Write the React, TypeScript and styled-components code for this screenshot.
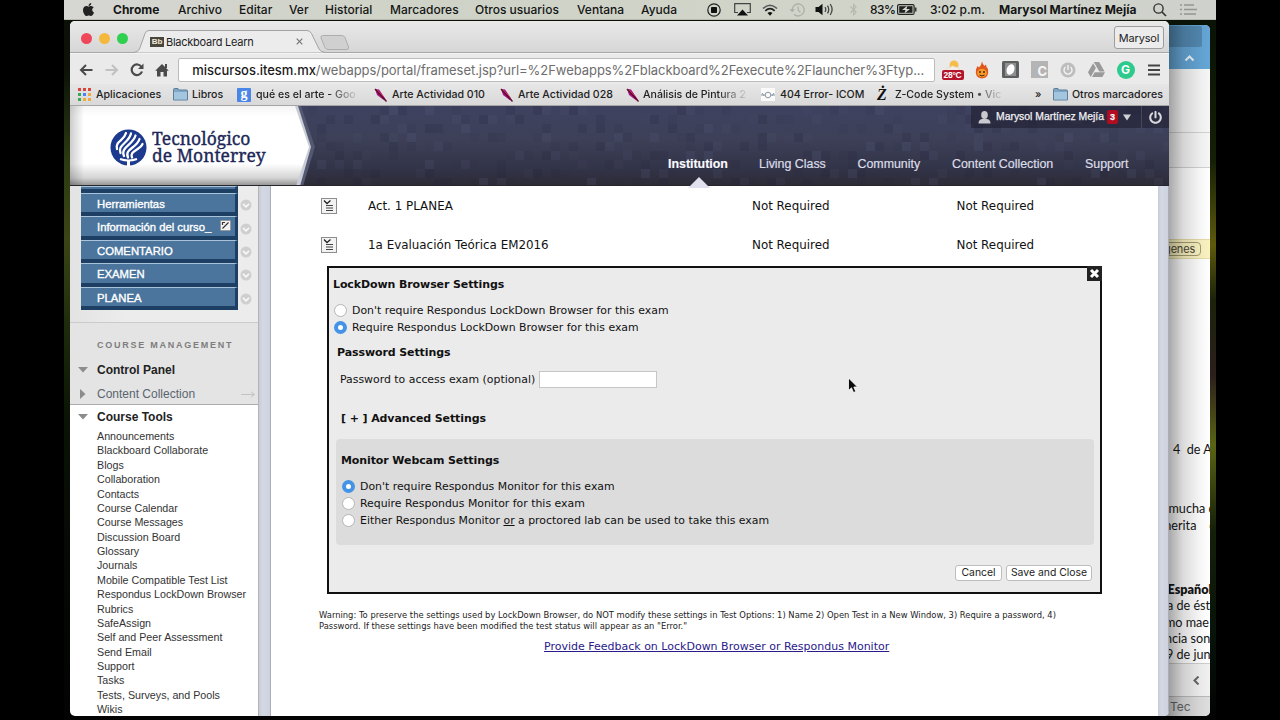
import React from 'react';
import styled, { createGlobalStyle } from 'styled-components';
import { FaApple, FaBluetoothB, FaGoogleDrive, FaPowerOff } from 'react-icons/fa';

const GlobalStyle = createGlobalStyle`
  *, *::before, *::after { box-sizing: border-box; }
  body { margin: 0; background: #000; overflow: hidden; }
`;

const sans = '"Liberation Sans", Arial, sans-serif';
const ui = 'Inter, Roboto, sans-serif';
const verdana = '"DejaVu Sans", Verdana, sans-serif';

/* ---------- desktop ---------- */

const Screen = styled.div`
  width: 1280px;
  height: 720px;
  background: #000;
  display: flex;
  justify-content: center;
  overflow: hidden;
`;

const Desktop = styled.div`
  position: relative;
  width: 1152px;
  height: 720px;
  overflow: hidden;
  background:
    linear-gradient(#0b1008 0, #0c1208 70px, #2c3a12 160px, #3a4516 240px, #1d2a0b 330px, #0a1305 420px, #050805 560px, #020302 720px) 0 0 / 50% 100% no-repeat,
    linear-gradient(#081106 0, #141f06 160px, #5d5a0d 245px, #1b220a 300px, #2b1f1c 375px, #5a6414 445px, #15200a 530px, #07120a 640px, #020302 720px) 100% 0 / 50% 100% no-repeat;
`;

const Spacer = styled.div<{ $w?: number }>`
  flex: ${p => (p.$w ? `0 0 ${p.$w}px` : '1 1 0')};
`;

/* ---------- system menu bar ---------- */

const MenuBar = styled.div`
  display: flex;
  align-items: center;
  height: 20px;
  background: linear-gradient(90deg, #d6d6d2, #cfd3c7 30%, #d0d4c9 70%, #cfd1cc);
  border-bottom: 1px solid #b9bbb3;
  font: 500 12px/20px ${ui};
  color: #151515;
`;

const MenuItem = styled.span<{ $w: number; $bold?: boolean; $ls?: number }>`
  flex: 0 0 ${p => p.$w}px;
  white-space: nowrap;
  font-weight: ${p => (p.$bold ? 700 : 450)};
  letter-spacing: ${p => p.$ls ?? 0}px;
`;

const MenuIcon = styled.span<{ $w: number }>`
  flex: 0 0 ${p => p.$w}px;
  display: flex;
  align-items: center;
  height: 20px;
`;

/* ---------- window behind the browser ---------- */

const BackWindow = styled.div`
  position: absolute;
  left: 1085px;
  top: 25px;
  width: 61px;
  height: 691px;
  border-radius: 5px;
  overflow: hidden;
  display: flex;
  flex-direction: column;
  background: #fff;
  font: 12.6px/16px Lato, "Open Sans", sans-serif;
  color: #141414;
`;

const BackTitle = styled.div`
  height: 45px;
  background: #64a6d6;
  display: flex;
  flex-direction: column;
`;

const BackSearch = styled.div`
  height: 21px;
  margin: 1px 8px 7px 0;
  background: #5288b0;
  border-radius: 2px;
`;

const BackArrows = styled.div`
  display: flex;
  justify-content: flex-end;
  padding-right: 15px;
  svg { display: block; }
`;

const BackToolbar = styled.div<{ $h: number }>`
  height: ${p => p.$h}px;
  background: #f6f6f6;
  border-bottom: 1px solid #d2d2d2;
`;

const BackNotice = styled.div`
  margin-top: 71px;
  height: 20px;
  background: #faf2c0;
  border-top: 1px solid #e6dca8;
  border-bottom: 1px solid #e6dca8;
  display: flex;
  align-items: center;
  justify-content: flex-end;
  padding-right: 9px;
`;

const BackPill = styled.div`
  border: 1px solid #a39c72;
  border-radius: 4px;
  width: 48px;
  height: 14px;
  padding-right: 5px;
  text-align: right;
  font: 11px/12px ${ui};
  letter-spacing: -0.2px;
  color: #4a4733;
`;

const BackLine = styled.div<{ $mt?: number; $ml?: number; $bold?: boolean }>`
  margin-top: ${p => p.$mt ?? 0}px;
  margin-left: ${p => p.$ml ?? 7}px;
  height: 16.3px;
  flex-shrink: 0;
  white-space: pre;
  font-weight: ${p => (p.$bold ? 800 : 400)};
`;

const BackFooter = styled.div`
  height: 33px;
  background: #f1f1f1;
  border-top: 1px solid #cfcfcf;
  display: flex;
  align-items: center;
  justify-content: flex-end;
  padding-right: 10px;
`;

const BackStatus = styled.div`
  height: 20px;
  background: #dedede;
  border-top: 1px solid #bbb;
  padding-left: 21px;
  font: 12px/19px ${ui};
  color: #666;
`;

/* ---------- browser window ---------- */

const Browser = styled.div`
  position: absolute;
  left: 6px;
  top: 21px;
  width: 1099px;
  height: 695px;
  border-radius: 5px;
  overflow: hidden;
  display: flex;
  flex-direction: column;
  background: #fff;
`;

const BrowserShadow = styled.div`
  position: absolute;
  left: 1085px;
  top: 25px;
  width: 61px;
  height: 691px;
  border-radius: 5px;
  background: linear-gradient(90deg, rgba(0, 0, 0, 0.34) 20px, rgba(0, 0, 0, 0.14) 34px, rgba(0, 0, 0, 0.03) 52px, transparent);
`;

const TitleBar = styled.div`
  display: flex;
  align-items: flex-start;
  height: 32px;
  background: linear-gradient(#e9e9e9, #d6d6d6);
  border-bottom: 1px solid #a8a8a8;
`;

const Lights = styled.div`
  display: flex;
  gap: 7px;
  padding: 12px 0 0 11px;
  width: 66px;
`;

const Light = styled.span<{ $c: string }>`
  width: 11px;
  height: 11px;
  border-radius: 50%;
  background: ${p => p.$c};
`;

const Tab = styled.div`
  position: relative;
  display: flex;
  align-items: center;
  width: 184px;
  height: 32px;
  padding: 9px 0 0 14px;
  font: 11px/14px ${ui};
  color: #1d1d1d;
`;

const TabShape = styled.svg`
  position: absolute;
  left: -2px;
  top: 9px;
`;

const TabIcon = styled.span`
  position: relative;
  width: 14px;
  height: 10px;
  margin-right: 2px;
  background: #4b463c;
  color: #f0ead8;
  font: bold 8px/10px ${sans};
  text-align: center;
`;

const TabTitle = styled.span`
  position: relative;
  flex: 1;
  letter-spacing: -0.25px;
`;

const TabClose = styled.svg`
  position: relative;
  margin-right: 17px;
`;

const NewTab = styled.svg`
  margin: 13px 0 0 0;
`;

const Profile = styled.div`
  margin: 5px 5px 0 0;
  width: 50px;
  height: 23px;
  border: 1px solid #9d9d9d;
  border-radius: 3px;
  background: #ececec;
  font: 10.9px/22px ${ui};
  letter-spacing: -0.1px;
  text-align: center;
  color: #222;
`;

const Toolbar = styled.div`
  display: flex;
  align-items: center;
  height: 31px;
  padding-top: 1px;
  background: #eaeaea;
  border-top: 1px solid #f4f4f4;
`;

const ToolIcon = styled.span<{ $w: number }>`
  flex: 0 0 ${p => p.$w}px;
  display: flex;
  justify-content: center;
  align-items: center;
  height: 24px;
`;

const Omnibox = styled.div`
  display: flex;
  align-items: center;
  width: 757px;
  height: 24px;
  padding: 0 4px 0 7px;
  background: #fff;
  border: 1px solid #bcbcbc;
  border-radius: 2px;
`;

const Url = styled.span`
  flex: 1;
  margin-left: 6px;
  font: 13px/22px ${ui};
  letter-spacing: -0.05px;
  color: #6d6d6d;
  white-space: nowrap;
  b { font-weight: 450; color: #1a1a1a; }
`;

const Weather = styled.span`
  display: flex;
  flex-direction: column;
  align-items: center;
  b {
    width: 22px;
    height: 10px;
    margin-top: -2px;
    background: #b5122c;
    border-radius: 2px;
    color: #fff;
    text-align: center;
    font: bold 8.5px/10px ${sans};
    letter-spacing: -0.3px;
  }
`;

const Grammar = styled.span`
  width: 18px;
  height: 18px;
  border-radius: 50%;
  background: #2dca8e;
  color: #fff;
  font: 700 12px/18px ${ui};
  text-align: center;
`;

const GraySquare = styled.span`
  width: 17px;
  height: 17px;
  background: #b4b4b4;
  color: #f6f6f6;
  text-align: right;
  padding-right: 1px;
  font: 700 13px/20px ${ui};
`;

const Bookmarks = styled.div`
  display: flex;
  align-items: center;
  height: 22px;
  padding-left: 8px;
  background: linear-gradient(#e6e6e6, #d9d9d9);
  border-bottom: 1px solid #a6a6a6;
`;

const Bookmark = styled.span<{ $w: number; $icon: number; $fade?: boolean; $ls?: number }>`
  flex: 0 0 ${p => p.$w}px;
  display: grid;
  grid-template-columns: ${p => p.$icon}px auto;
  justify-content: start;
  align-items: center;
  font: 450 10.6px/18px ${ui};
  letter-spacing: ${p => p.$ls ?? 0}px;
  color: #222;
  white-space: nowrap;
  svg { display: block; }
  em {
    font-style: normal;
    ${p => p.$fade && 'mask-image: linear-gradient(90deg, #000 72%, rgba(0,0,0,0.1) 100%);'}
  }
`;

const GoogleIcon = styled.span`
  width: 14px;
  height: 14px;
  border-radius: 1px;
  background: #4a86e8;
  color: #fff;
  font: bold 14px/11px "Liberation Serif", serif;
  text-align: center;
`;

const ZIcon = styled.span`
  font: italic bold 16px/18px "Liberation Serif", serif;
  color: #111;
`;

const PhotoIcon = styled.span`
  width: 14px;
  height: 13px;
  background: #fafafa;
  display: flex;
  align-items: center;
`;

/* ---------- page header ---------- */

const Header = styled.div`
  position: relative;
  display: flex;
  justify-content: space-between;
  height: 80px;
  flex-shrink: 0;
  background: linear-gradient(#3f4260 0%, #3d4058 40%, #33354a 75%, #2c2b36 100%);
`;

const HeaderArt = styled.svg`
  position: absolute;
  left: 0;
  top: 0;
`;

const Brand = styled.div`
  position: relative;
  display: flex;
  align-items: center;
  gap: 5px;
  padding: 2px 0 0 40px;
  svg { display: block; }
`;

const BrandName = styled.div`
  font: 17.5px/17px "Noto Serif", "Liberation Serif", serif;
  color: #1d2757;
  -webkit-text-stroke: 0.35px #1d2757;
  span { display: block; white-space: nowrap; }
`;

const HeaderRight = styled.div`
  position: relative;
  display: flex;
  flex-direction: column;
  align-items: flex-end;
`;

const UserBar = styled.div`
  display: flex;
  align-items: center;
  width: 198px;
  height: 22px;
  padding-left: 7px;
  background: rgba(28, 28, 44, 0.55);
  font: 10.4px/22px ${sans};
  color: #f2f2f4;
  -webkit-text-stroke: 0.25px #f2f2f4;
`;

const UserName = styled.span`
  margin-left: 5px;
  width: 111px;
  white-space: nowrap;
`;

const Count = styled.span`
  width: 11px;
  height: 14px;
  border-radius: 2px;
  background: #b00d20;
  text-align: center;
  font: bold 9px/14px ${sans};
`;

const PowerCell = styled.span`
  margin-left: 10px;
  padding-left: 7px;
  height: 22px;
  border-left: 1px solid #45475a;
  display: flex;
  align-items: center;
`;

const Nav = styled.div`
  display: flex;
  margin-top: 25px;
  width: 501px;
  height: 33px;
  font: 12.4px/22px ${sans};
  color: #dcdde6;
  -webkit-text-stroke: 0.2px #dcdde6;
`;

const NavItem = styled.div<{ $w: number; $active?: boolean }>`
  flex: 0 0 ${p => p.$w}px;
  white-space: nowrap;
  font-weight: ${p => (p.$active ? 700 : 400)};
  color: ${p => (p.$active ? '#fff' : 'inherit')};
  svg { display: block; margin: 1px 0 0 20px; }
`;

/* ---------- page body ---------- */

const Page = styled.div`
  display: flex;
  height: 530px;
`;

const Sidebar = styled.div`
  width: 189px;
  border-right: 1px solid #b4b4b4;
  display: flex;
  flex-direction: column;
  overflow: hidden;
  font-family: ${sans};
`;

const CourseMenu = styled.div`
  height: 137px;
  flex-shrink: 0;
  background: linear-gradient(90deg, #e3e3e3, #ececec 30%);
  border-bottom: 1px solid #cbcbcb;
`;

const CourseRow = styled.div<{ $h?: number }>`
  display: flex;
  align-items: center;
  height: ${p => p.$h ?? 23.4}px;
  padding-left: 11px;
  gap: 2px;
  svg { display: block; flex-shrink: 0; margin-top: 1px; }
`;

const CourseLink = styled.div`
  display: flex;
  justify-content: space-between;
  width: 157px;
  height: 100%;
  padding: 0 4px 0 16px;
  background: #4b759d;
  border-top: 1px solid #a9c3da;
  border-right: 3px solid #1e3f64;
  border-bottom: 4px solid #1e3f64;
  color: #fff;
  font: 11.3px/20px ${sans};
  -webkit-text-stroke: 0.35px #fff;
  white-space: nowrap;
  svg { margin-top: 3px; }
`;

const Management = styled.div`
  height: 82px;
  flex-shrink: 0;
  background: #e4e4e4;
  border-bottom: 1px solid #ababab;
`;

const SectionLabel = styled.div`
  padding: 12px 0 0 27px;
  height: 35px;
  font: bold 9px/20px ${sans};
  letter-spacing: 1.75px;
  color: #7d7d7d;
`;

const Group = styled.div<{ $muted?: boolean }>`
  display: flex;
  align-items: center;
  height: 24px;
  padding: 0 2px 0 8px;
  font: ${p => (p.$muted ? '400' : '700')} 12px/24px ${sans};
  color: ${p => (p.$muted ? '#5a6470' : '#222')};
  span { flex: 1; }
`;

const GroupMark = styled.svg`
  width: 10px;
  margin-right: 9px;
`;

const ToolList = styled.div`
  padding: 0 0 0 27px;
  font: 10.7px/14.39px ${sans};
  color: #333;
  div { height: 14.39px; white-space: nowrap; }
`;

const Gutter = styled.div<{ $w: number }>`
  width: ${p => p.$w}px;
  flex-shrink: 0;
  background: linear-gradient(90deg, #c9ccd2, #d3d9e4 35%, #cdd2de);
  border-right: 1px solid #a9aeb8;
`;

const Main = styled.div`
  flex: 1;
  background: #fff;
  font-family: ${verdana};
  color: #111;
`;

const ExamRow = styled.div`
  display: grid;
  grid-template-columns: 47px 384px 204.5px auto;
  align-items: center;
  height: 39.5px;
  padding-left: 50px;
  font-size: 11.9px;
  svg { display: block; }
`;

const Dialog = styled.div`
  position: relative;
  margin: 1px 0 0 56px;
  width: 775px;
  height: 328px;
  padding-top: 7px;
  border: 2px solid #111;
  background: #ebebeb;
  font-size: 11px;
`;

const CloseBox = styled.svg`
  position: absolute;
  right: -2px;
  top: -2px;
`;

const Heading = styled.div<{ $ml: number; $mt?: number }>`
  margin: ${p => p.$mt ?? 0}px 0 0 ${p => p.$ml}px;
  height: 20px;
  font: bold 11px/20px ${verdana};
  letter-spacing: -0.1px;
  white-space: pre;
`;

const Options = styled.div<{ $ml: number }>`
  margin: 7px 0 0 ${p => p.$ml}px;
`;

const Option = styled.label`
  display: flex;
  align-items: center;
  gap: 5px;
  height: 17px;
  font-size: 10.9px;
  white-space: pre;
`;

const Radio = styled.span<{ $on?: boolean }>`
  width: 13px;
  height: 13px;
  border-radius: 50%;
  border: ${p => (p.$on ? '4.5px solid #4593e6' : '1px solid #b5b5b5')};
  background: #fff;
`;

const Field = styled.div`
  display: flex;
  align-items: center;
  gap: 4px;
  margin: 6px 0 0 11px;
  height: 20px;
  font-size: 10.9px;
`;

const Input = styled.div`
  width: 118px;
  height: 17px;
  border: 1px solid #c6c6c6;
  background: #fff;
`;

const Monitor = styled.div`
  margin: 10px 6px 0 7px;
  height: 106px;
  padding-top: 12px;
  border-radius: 4px;
  background: #dcdcdc;
`;

const Actions = styled.div`
  display: flex;
  justify-content: flex-end;
  gap: 4px;
  padding: 20px 8px 0 0;
`;

const Button = styled.div<{ $w: number }>`
  width: ${p => p.$w}px;
  height: 16px;
  border: 1px solid #bdbdbd;
  border-radius: 3px;
  background: #fff;
  text-align: center;
  font: 10.4px/14px ${ui};
  color: #222;
  white-space: nowrap;
`;

const Warning = styled.div`
  margin: 16px 0 0 48px;
  font-size: 8.4px;
  line-height: 10.7px;
  color: #222;
  div { white-space: nowrap; }
`;

const Feedback = styled.div`
  margin: 8px 0 0 273px;
  font-size: 11px;
  line-height: 16px;
  color: #2a1a8a;
  text-decoration: underline;
`;

const Pointer = styled.svg`
  position: absolute;
  left: 783px;
  top: 377px;
`;

/* ---------- drawings ---------- */

const Feather = () => (
  <svg width="13" height="14" viewBox="0 0 13 14">
    <path d="M1 1 L5 1.5 L10.500 9.500 L12.500 13 L9 11.500 L3 7 Z" fill="#a3128a" />
    <path d="M1 1 L12.500 13.500" stroke="#5b0b22" strokeWidth="1.300" />
    <path d="M3 2 L10 9" stroke="#d43b3b" strokeWidth="0.700" />
  </svg>
);

const Folder = () => (
  <svg width="15" height="13" viewBox="0 0 15 13">
    <path d="M0.500 1.500 Q0.500 0.500 1.500 0.500 H5 L6.200 2 H13.500 Q14.500 2 14.500 3 V12 H0.500 Z" fill="#7fa6c4" stroke="#5c7f9a" />
    <rect x="1" y="4" width="13" height="7.500" fill="#a3c6de" />
  </svg>
);

const AppsGrid = () => (
  <svg width="13" height="13" viewBox="0 0 13 13">
    {['#d8453c', '#d8453c', '#d8453c', '#3aa757', '#4285f4', '#f2a93b', '#3aa757', '#f2a93b', '#f2a93b'].map((c, i) => (
      <rect key={i} x={(i % 3) * 5} y={Math.floor(i / 3) * 5} width="3" height="3" fill={c} />
    ))}
  </svg>
);

const Chevron = () => (
  <svg width="12" height="12" viewBox="0 0 12 12">
    <circle cx="6" cy="6" r="5.500" fill="#cfcfcf" />
    <path d="M3 4.800 L6 7.800 L9 4.800" fill="none" stroke="#f7f7f7" strokeWidth="1.800" />
  </svg>
);

const RowMenu = () => (
  <svg width="16" height="16" viewBox="0 0 16 16">
    <rect x="0.500" y="0.500" width="15" height="15" fill="#f3f3f3" stroke="#8d8d8d" />
    <path d="M3 2.500 L6 5.500 L9.500 2.500" fill="none" stroke="#222" strokeWidth="1.300" />
    <path d="M5 7.500 H12 M5 10 H12 M5 12.500 H12" stroke="#444" strokeWidth="1" />
  </svg>
);

const Caret = ({ right }: { right?: boolean }) => (
  <GroupMark width="10" height="10" viewBox="0 0 10 10">
    <path d={right ? 'M2 0 L7.500 5 L2 10 Z' : 'M0 2 H10 L5 7.500 Z'} fill="#8c8c8c" />
  </GroupMark>
);

const Torch = () => (
  <svg width="37" height="37" viewBox="0 0 37 37">
    <circle cx="18.500" cy="18.500" r="18" fill="#1c3a8e" />
    <g fill="none" stroke="#fff" strokeWidth="2.300" strokeLinecap="round">
      <path d="M7 20 C5 12 14 12 16 4" />
      <path d="M10.500 24 C7 16 19 14 21 4.500" />
      <path d="M14 27 C10 18 23 16 25.500 6.500" />
      <path d="M18 28.500 C14 20 27 19 29.500 10" />
      <path d="M22 28.500 C19 22 30 21 32.500 15" />
    </g>
    <path d="M10 30 Q18.500 33 27 30" fill="none" stroke="#fff" strokeWidth="2" />
    <path d="M18.500 31 V37" stroke="#fff" strokeWidth="3" />
  </svg>
);

const pixels = Array.from({ length: 260 }, (_, i) => {
  const a = (i * 7919 + 13) % 1009;
  const b = (i * 104729 + 7) % 997;
  return {
    x: 238 + (a % 96) * 9,
    y: (b % 9) * 9,
    dark: (a * 3 + b) % 5 < 3,
    o: 0.05 + ((a + b) % 7) * 0.025,
  };
});

const exts = (
  <>
    <ToolIcon $w={29}>
      <Weather>
        <svg width="16" height="12" viewBox="0 0 16 12">
          <circle cx="9" cy="5" r="4.500" fill="#f6bd4a" />
          <path d="M1 11 Q1 7 5 7.500 Q7 4.500 10 7 Q15 6.500 15 11 Z" fill="#f3eee4" stroke="#d9cfb8" strokeWidth="0.500" />
        </svg>
        <b>28°C</b>
      </Weather>
    </ToolIcon>
    <ToolIcon $w={29}>
      <svg width="16" height="18" viewBox="0 0 16 18">
        <path d="M8 0.500 Q8.500 3 10.500 5 L12 3.500 Q12 6 14 8 Q15.500 17 8 17.500 Q0.500 17 2 8.500 L3.500 5 L5 6.500 Q7.500 4 8 0.500 Z" fill="#e2571e" />
        <ellipse cx="8" cy="12" rx="4.800" ry="4.200" fill="#f59b2c" />
        <path d="M6 10 V12 M10 10 V12" stroke="#40210e" strokeWidth="1.400" />
        <path d="M5.500 14 Q8 16 10.500 14" fill="none" stroke="#40210e" />
      </svg>
    </ToolIcon>
    <ToolIcon $w={29}>
      <svg width="17" height="17" viewBox="0 0 17 17">
        <rect width="17" height="17" rx="1.500" fill="#5c5f60" />
        <rect x="3" y="2" width="11" height="13" fill="#8d9091" />
        <ellipse cx="8.500" cy="8.500" rx="3.800" ry="5.500" transform="rotate(20 8.500 8.500)" fill="#fff" />
      </svg>
    </ToolIcon>
    <ToolIcon $w={29}><GraySquare>C</GraySquare></ToolIcon>
    <ToolIcon $w={28}>
      <svg width="16" height="16" viewBox="0 0 16 16">
        <circle cx="8" cy="8" r="7.500" fill="#bdbdbd" />
        <path d="M5.500 5 A4 4 0 1 0 10.500 5 M8 3 V8" fill="none" stroke="#f3f3f3" strokeWidth="1.400" />
      </svg>
    </ToolIcon>
    <ToolIcon $w={29}><FaGoogleDrive size={17} color="#9a9a9a" /></ToolIcon>
    <ToolIcon $w={29}><Grammar>G</Grammar></ToolIcon>
    <ToolIcon $w={28}>
      <svg width="12" height="12" viewBox="0 0 12 12">
        <path d="M0 1.500 H12 M0 6 H12 M0 10.500 H12" stroke="#444" strokeWidth="2.200" />
      </svg>
    </ToolIcon>
  </>
);

const courseLinks = ['Herramientas', 'Información del curso_', 'COMENTARIO', 'EXAMEN', 'PLANEA'];

const tools = [
  'Announcements', 'Blackboard Collaborate', 'Blogs', 'Collaboration', 'Contacts', 'Course Calendar',
  'Course Messages', 'Discussion Board', 'Glossary', 'Journals', 'Mobile Compatible Test List',
  'Respondus LockDown Browser', 'Rubrics', 'SafeAssign', 'Self and Peer Assessment', 'Send Email',
  'Support', 'Tasks', 'Tests, Surveys, and Pools', 'Wikis',
];

const exams = ['Act. 1 PLANEA', '1a Evaluación Teórica EM2016'];

const SystemMenu = () => (
  <MenuBar>
    <Spacer $w={17} />
    <MenuIcon $w={32}><FaApple size={15} color="#222" /></MenuIcon>
    <MenuItem $w={65} $bold>Chrome</MenuItem>
    <MenuItem $w={61}>Archivo</MenuItem>
    <MenuItem $w={50}>Editar</MenuItem>
    <MenuItem $w={36}>Ver</MenuItem>
    <MenuItem $w={65}>Historial</MenuItem>
    <MenuItem $w={85}>Marcadores</MenuItem>
    <MenuItem $w={102}>Otros usuarios</MenuItem>
    <MenuItem $w={64}>Ventana</MenuItem>
    <MenuItem $w={66}>Ayuda</MenuItem>
    <MenuIcon $w={27}>
      <svg width="14" height="14" viewBox="0 0 14 14">
        <circle cx="7" cy="7" r="6.200" fill="none" stroke="#222" strokeWidth="1.200" />
        <rect x="4" y="4" width="6" height="6" rx="0.800" fill="#111" />
      </svg>
    </MenuIcon>
    <MenuIcon $w={28}>
      <svg width="17" height="13" viewBox="0 0 17 13">
        <path d="M4 9.500 H0.700 V0.700 H16.300 V9.500 H13" fill="none" stroke="#444" strokeWidth="1.200" />
        <path d="M8.500 6.500 L14 12.500 H3 Z" fill="#111" />
      </svg>
    </MenuIcon>
    <MenuIcon $w={27}>
      <svg width="16" height="12" viewBox="0 0 16 12">
        <path d="M1 4.500 Q8 -2 15 4.500" fill="none" stroke="#555" strokeWidth="1.600" />
        <path d="M3.300 6.800 Q8 2.500 12.700 6.800" fill="none" stroke="#222" strokeWidth="1.700" />
        <path d="M5.500 9 Q8 6.800 10.500 9 L8 11.700 Z" fill="#111" />
      </svg>
    </MenuIcon>
    <MenuIcon $w={26}>
      <svg width="16" height="14" viewBox="0 0 16 14">
        <path d="M3.200 7 A6 6 0 1 1 5 11.300" fill="none" stroke="#adb0a8" strokeWidth="1.300" />
        <path d="M0.500 6 H6 L3.200 9.500 Z" fill="#adb0a8" />
        <path d="M9.200 3.500 V7.300 L11.500 9.500" fill="none" stroke="#adb0a8" strokeWidth="1.200" />
      </svg>
    </MenuIcon>
    <MenuIcon $w={32}>
      <svg width="19" height="13" viewBox="0 0 19 13">
        <path d="M0.500 4 H3.500 L7.500 0.800 V12.200 L3.500 9 H0.500 Z" fill="#111" />
        <path d="M10 4.200 Q11.500 6.500 10 8.800 M12.500 2.700 Q15 6.500 12.500 10.300 M15.200 1 Q19 6.500 15.200 12" fill="none" stroke="#444" strokeWidth="1.300" />
      </svg>
    </MenuIcon>
    <MenuIcon $w={23}><FaBluetoothB size={13} color="#b4b7af" /></MenuIcon>
    <MenuItem $w={27} $ls={-0.6}>83%</MenuItem>
    <MenuIcon $w={33}>
      <svg width="20" height="11" viewBox="0 0 20 11">
        <rect x="0.600" y="0.600" width="16.500" height="9.800" rx="1.500" fill="none" stroke="#222" strokeWidth="1.200" />
        <rect x="2.200" y="2.200" width="13.300" height="6.600" fill="#222" />
        <rect x="18" y="3.500" width="1.500" height="4" fill="#333" />
        <path d="M10.500 1.500 L5 6 H8.500 L7.500 9.500 L13 5 H9.500 Z" fill="#d3d6cc" />
      </svg>
    </MenuIcon>
    <MenuItem $w={69}>3:02 p.m.</MenuItem>
    <MenuItem $w={154} $bold>Marysol Martínez Mejía</MenuItem>
    <MenuIcon $w={27}>
      <svg width="14" height="14" viewBox="0 0 14 14">
        <circle cx="5.500" cy="5.500" r="4.600" fill="none" stroke="#333" strokeWidth="1.400" />
        <path d="M9 9 L13 13" stroke="#333" strokeWidth="1.700" />
      </svg>
    </MenuIcon>
    <MenuIcon $w={20}>
      <svg width="17" height="11" viewBox="0 0 17 11">
        <path d="M0 1 H2 M4 1 H14 M0 5.500 H2 M4 5.500 H17 M0 10 H2 M4 10 H16" stroke="#94978f" strokeWidth="1.500" />
      </svg>
    </MenuIcon>
  </MenuBar>
);

export default function App() {
  return (
    <Screen>
      <GlobalStyle />
      <Desktop>
        <SystemMenu />

        <BackWindow>
          <BackTitle>
            <BackSearch />
            <BackArrows>
              <svg width="31" height="9" viewBox="0 0 31 9">
                <path d="M0 3 H5 L2.500 6 Z" fill="#d8e9f5" />
                <path d="M21.500 6.500 L25.500 2.500 L29.500 6.500" fill="none" stroke="#eef6fb" strokeWidth="2" />
              </svg>
            </BackArrows>
          </BackTitle>
          <BackToolbar $h={64} />
          <BackToolbar $h={36} />
          <BackNotice><BackPill>genes</BackPill></BackNotice>
          <BackLine $mt={183} $ml={24}>4  de A</BackLine>
          <BackLine $mt={43} $ml={19.500}>mucha d</BackLine>
          <BackLine $ml={12}>merita    e</BackLine>
          <BackLine $mt={48} $ml={18.500} $bold>Español</BackLine>
          <BackLine $ml={18}>a de ést</BackLine>
          <BackLine $ml={16}>mo mae</BackLine>
          <BackLine $ml={16}>ncia son</BackLine>
          <BackLine $ml={17}>9 de jun</BackLine>
          <Spacer />
          <BackFooter>
            <svg width="7" height="9" viewBox="0 0 7 9">
              <path d="M5.500 0.500 L1.500 4.500 L5.500 8.500" fill="none" stroke="#666" strokeWidth="2" />
            </svg>
          </BackFooter>
          <BackStatus>Tec</BackStatus>
        </BackWindow>
        <BrowserShadow />

        <Browser>
          <TitleBar>
            <Lights>
              <Light $c="#f0465a" />
              <Light $c="#f6b83c" />
              <Light $c="#2fd04f" />
            </Lights>
            <Tab>
              <TabShape width="194" height="23" viewBox="0 0 194 23">
                <path d="M0 22.500 Q4 22 5.500 19 L11 3.500 Q12 0.500 15 0.500 H173 Q176 0.500 177.500 3.500 L185 19 Q186.500 22 191 22.500" fill="#ececec" stroke="#a3a3a3" />
              </TabShape>
              <TabIcon>Bb</TabIcon>
              <TabTitle>Blackboard Learn</TabTitle>
              <TabClose width="7" height="7" viewBox="0 0 7 7">
                <path d="M0.700 0.700 L6.300 6.300 M6.300 0.700 L0.700 6.300" stroke="#777" strokeWidth="1.200" />
              </TabClose>
            </Tab>
            <NewTab width="30" height="17" viewBox="0 0 30 17">
              <path d="M2.500 1.500 H22 Q24 1.500 25 3.500 L28.500 13 Q29 15.500 27 15.500 H8 Q6 15.500 5 13.500 L1 4 Q0.500 1.500 2.500 1.500 Z" fill="#d0d0d0" stroke="#adadad" />
            </NewTab>
            <Spacer />
            <Profile>Marysol</Profile>
          </TitleBar>

          <Toolbar>
            <Spacer $w={3} />
            <ToolIcon $w={26}>
              <svg width="14" height="12" viewBox="0 0 14 12">
                <path d="M13.500 6 H2 M7 1 L2 6 L7 11" fill="none" stroke="#4a4a4a" strokeWidth="2" />
              </svg>
            </ToolIcon>
            <ToolIcon $w={25}>
              <svg width="14" height="12" viewBox="0 0 14 12">
                <path d="M0.500 6 H12 M7 1 L12 6 L7 11" fill="none" stroke="#c1c1c1" strokeWidth="2" />
              </svg>
            </ToolIcon>
            <ToolIcon $w={26}>
              <svg width="14" height="14" viewBox="0 0 14 14">
                <path d="M11.500 4 A5.300 5.300 0 1 0 12 8.500" fill="none" stroke="#4a4a4a" strokeWidth="2.200" />
                <path d="M13.500 0.500 V6 H8 Z" fill="#4a4a4a" />
              </svg>
            </ToolIcon>
            <ToolIcon $w={24}>
              <svg width="14" height="14" viewBox="0 0 14 14">
                <path d="M7 1 L13.800 7.800 H12 V13.500 H8.500 V9 H5.500 V13.500 H2 V7.800 H0.200 Z" fill="#4a4a4a" />
                <rect x="10" y="1" width="2" height="4" fill="#4a4a4a" />
              </svg>
            </ToolIcon>
            <Spacer $w={4} />
            <Omnibox>
              <svg width="11" height="14" viewBox="0 0 11 14">
                <path d="M0.500 0.500 H7 L10.500 4 V13.500 H0.500 Z M7 0.500 V4 H10.500" fill="#fff" stroke="#999" />
              </svg>
              <Url><b>miscursos.itesm.mx</b>/webapps/portal/frameset.jsp?url=%2Fwebapps%2Fblackboard%2Fexecute%2Flauncher%3Ftyp...</Url>
              <svg width="13" height="14" viewBox="0 0 13 14">
                <path d="M0.700 2 Q4 2 6.500 0.700 Q9 2 12.300 2 Q12.800 10 6.500 13.300 Q0.200 10 0.700 2 Z" fill="#ddd" stroke="#999" />
                <path d="M3 11 L11 3.500 Q11.500 9 6.500 12.200 Z" fill="#b9b9b9" />
              </svg>
              <Spacer $w={5} />
              <svg width="17" height="16" viewBox="0 0 17 16">
                <path d="M8.500 1 L10.700 5.900 L16 6.400 L12 9.900 L13.200 15.200 L8.500 12.400 L3.800 15.200 L5 9.900 L1 6.400 L6.300 5.900 Z" fill="#fff" stroke="#777" strokeWidth="1.100" />
              </svg>
            </Omnibox>
            <Spacer $w={3} />
            {exts}
          </Toolbar>

          <Bookmarks>
            <Bookmark $w={95} $icon={18}><AppsGrid /><em>Aplicaciones</em></Bookmark>
            <Bookmark $w={64} $icon={19}><Folder /><em>Libros</em></Bookmark>
            <Bookmark $w={137} $icon={19} $fade><GoogleIcon>g</GoogleIcon><em>qué es el arte - Goo</em></Bookmark>
            <Bookmark $w={126} $icon={18}><Feather /><em>Arte Actividad 010</em></Bookmark>
            <Bookmark $w={126} $icon={18}><Feather /><em>Arte Actividad 028</em></Bookmark>
            <Bookmark $w={135} $icon={17} $fade><Feather /><em>Análisis de Pintura 2</em></Bookmark>
            <Bookmark $w={116} $icon={19}>
              <PhotoIcon>
                <svg width="14" height="8" viewBox="0 0 14 8">
                  <circle cx="7" cy="4" r="2.800" fill="none" stroke="#8a96a3" />
                  <path d="M0 4 H4 M10 4 H14 M1 2 L3 5 M13 2 L11 5" stroke="#8a96a3" />
                </svg>
              </PhotoIcon>
              <em>404 Error- ICOM</em>
            </Bookmark>
            <Bookmark $w={158} $icon={18} $fade><ZIcon>Ż</ZIcon><em>Z-Code System • Vic</em></Bookmark>
            <Bookmark $w={18} $icon={8}><em>»</em></Bookmark>
            <Bookmark $w={108} $icon={19}><Folder /><em>Otros marcadores</em></Bookmark>
          </Bookmarks>

          <Header>
            <HeaderArt width="1099" height="80" viewBox="0 0 1099 80">
              <defs>
                <linearGradient id="plate" x1="0" y1="0" x2="0" y2="1">
                  <stop offset="0" stopColor="#f4f4f4" />
                  <stop offset="0.120" stopColor="#fff" />
                  <stop offset="0.720" stopColor="#fff" />
                  <stop offset="0.900" stopColor="#d4d4d4" />
                  <stop offset="1" stopColor="#8e8e8e" />
                </linearGradient>
                <linearGradient id="plateSide" x1="0" y1="0" x2="1" y2="0">
                  <stop offset="0" stopColor="#000" stopOpacity="0.200" />
                  <stop offset="1" stopColor="#000" stopOpacity="0" />
                </linearGradient>
              </defs>
              {pixels.map((p, i) => (
                <rect key={i} x={p.x} y={p.y} width="9" height="9" fill={p.dark ? '#22233a' : '#5a5f80'} opacity={p.o} />
              ))}
              <path d="M0 0 H231 L245 41 L233 80 H0 Z" fill="#535970" />
              <path d="M0 0 H228 L241 41 L230 80 H0 Z" fill="#c9ccd6" />
              <path d="M0 0 H225 L239 41 L226 80 H0 Z" fill="url(#plate)" />
              <rect width="14" height="80" fill="url(#plateSide)" />
              <path d="M0 79.500 H1099" stroke="#26262c" />
            </HeaderArt>
            <Brand>
              <Torch />
              <BrandName>
                <span>Tecnológico</span>
                <span>de Monterrey</span>
              </BrandName>
            </Brand>
            <HeaderRight>
              <UserBar>
                <svg width="13" height="13" viewBox="0 0 13 13">
                  <ellipse cx="6.500" cy="4" rx="3.300" ry="3.900" fill="#c9c9cf" />
                  <path d="M0.500 12.500 Q0.500 8.500 4 8 H9 Q12.500 8.500 12.500 12.500 Z" fill="#c9c9cf" />
                </svg>
                <UserName>Marysol Martínez Mejía</UserName>
                <Count>3</Count>
                <Spacer $w={5} />
                <svg width="8" height="7" viewBox="0 0 8 7"><path d="M0 0.500 H8 L4 6.500 Z" fill="#d2d2d6" /></svg>
                <PowerCell><FaPowerOff size={13} color="#d9d9de" /></PowerCell>
              </UserBar>
              <Nav>
                <NavItem $w={91} $active>
                  Institution
                  <svg width="22" height="12" viewBox="0 0 22 12"><path d="M11 1 L22 12 H0 Z" fill="#dfe2ee" /></svg>
                </NavItem>
                <NavItem $w={98.500}>Living Class</NavItem>
                <NavItem $w={94.500}>Community</NavItem>
                <NavItem $w={133}>Content Collection</NavItem>
                <NavItem $w={60}>Support</NavItem>
              </Nav>
            </HeaderRight>
          </Header>

          <Page>
            <Sidebar>
              <CourseMenu>
                <CourseRow $h={7}><CourseLink /></CourseRow>
                {courseLinks.map((name, i) => (
                  <CourseRow key={name}>
                    <CourseLink>
                      {name}
                      {i === 1 && (
                        <svg width="11" height="11" viewBox="0 0 11 11">
                          <rect x="0.500" y="0.500" width="10" height="10" rx="1" fill="#f2f2f2" stroke="#999" />
                          <path d="M2.500 8.500 L8.500 2.500 M5 2.500 H2.500 V5" fill="none" stroke="#333" strokeWidth="1.200" />
                        </svg>
                      )}
                    </CourseLink>
                    <Chevron />
                  </CourseRow>
                ))}
              </CourseMenu>
              <Management>
                <SectionLabel>COURSE MANAGEMENT</SectionLabel>
                <Group><Caret /><span>Control Panel</span></Group>
                <Group $muted>
                  <Caret right />
                  <span>Content Collection</span>
                  <svg width="15" height="7" viewBox="0 0 15 7">
                    <path d="M0 3.500 H13 M10 0.800 L13.500 3.500 L10 6.200" fill="none" stroke="#c2c2c2" />
                  </svg>
                </Group>
              </Management>
              <Group><Caret /><span>Course Tools</span></Group>
              <ToolList>
                {tools.map(name => <div key={name}>{name}</div>)}
              </ToolList>
            </Sidebar>
            <Gutter $w={12} />

            <Main>
              {exams.map(name => (
                <ExamRow key={name}>
                  <RowMenu />
                  <span>{name}</span>
                  <span>Not Required</span>
                  <span>Not Required</span>
                </ExamRow>
              ))}
              <Dialog>
                <CloseBox width="15" height="15" viewBox="0 0 15 15">
                  <rect width="15" height="15" fill="#222" />
                  <path d="M4 4 L11 11 M11 4 L4 11" stroke="#fff" strokeWidth="3" />
                </CloseBox>
                <Heading $ml={4}>LockDown Browser Settings</Heading>
                <Options $ml={5}>
                  <Option><Radio />Don't require Respondus LockDown Browser for this exam</Option>
                  <Option><Radio $on />Require Respondus LockDown Browser for this exam</Option>
                </Options>
                <Heading $ml={8} $mt={7}>Password Settings</Heading>
                <Field>Password to access exam (optional)<Input /></Field>
                <Heading $ml={12} $mt={20}>[ + ] Advanced Settings</Heading>
                <Monitor>
                  <Heading $ml={5}>Monitor Webcam Settings</Heading>
                  <Options $ml={6}>
                    <Option><Radio $on />Don't require Respondus Monitor for this exam</Option>
                    <Option><Radio />Require Respondus Monitor for this exam</Option>
                    <Option><Radio /><span>Either Respondus Monitor <u>or</u> a proctored lab can be used to take this exam</span></Option>
                  </Options>
                </Monitor>
                <Actions>
                  <Button $w={47}>Cancel</Button>
                  <Button $w={86}>Save and Close</Button>
                </Actions>
              </Dialog>
              <Warning>
                <div>Warning: To preserve the settings used by LockDown Browser, do NOT modify these settings in Test Options: 1) Name 2) Open Test in a New Window, 3) Require a password, 4)</div>
                <div>Password. If these settings have been modified the test status will appear as an "Error."</div>
              </Warning>
              <Feedback>Provide Feedback on LockDown Browser or Respondus Monitor</Feedback>
            </Main>
            <Gutter $w={11} />
          </Page>
        </Browser>

        <Pointer width="13" height="18" viewBox="0 0 13 18">
          <path d="M1.500 1 V13.500 L4.500 10.800 L6.500 15.500 L8.800 14.500 L6.800 10 H10.500 Z" fill="#0a0a0a" stroke="#fff" strokeWidth="0.800" />
        </Pointer>
      </Desktop>
    </Screen>
  );
}
